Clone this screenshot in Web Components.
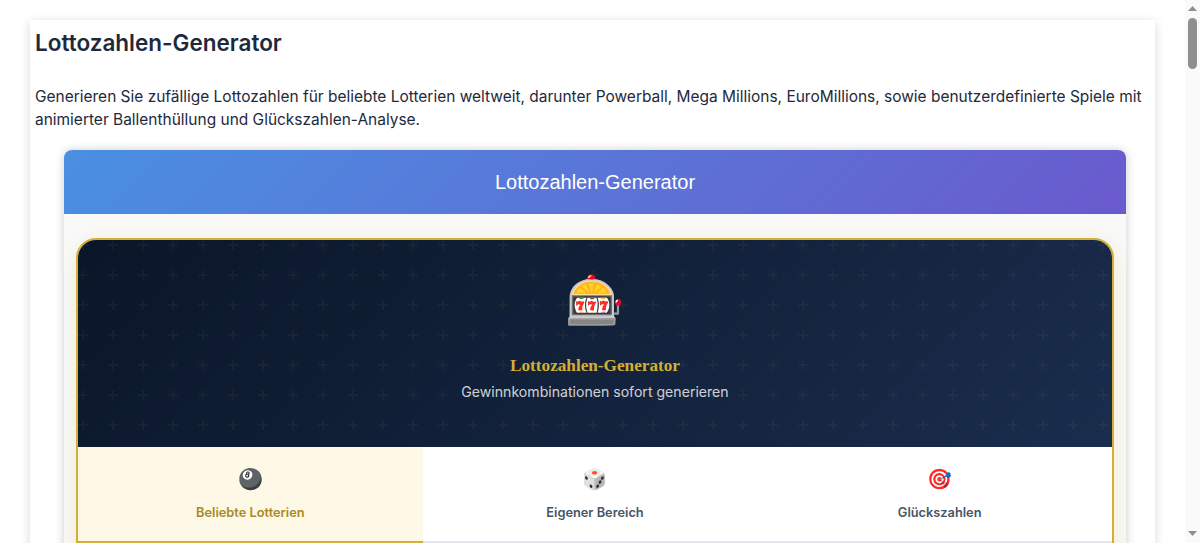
<!DOCTYPE html>
<html lang="de">
<head>
<meta charset="utf-8">
<title>Lottozahlen-Generator</title>
<style>
  html, body { height: 100%; }
  body { margin: 0; display: flex; overflow: hidden; background: #fff; font-family: Inter, "Noto Sans", sans-serif; color: #1e293b; }
  main { flex: 1; min-width: 0; overflow: hidden; padding: 20px 30px 0; }
</style>
</head>
<body>
<main>
<lotto-page heading="Lottozahlen-Generator">
  Generieren Sie zufällige Lottozahlen für beliebte Lotterien weltweit, darunter Powerball, Mega Millions, EuroMillions, sowie benutzerdefinierte Spiele mit animierter Ballenthüllung und Glückszahlen-Analyse.
  <lotto-widget slot="widget" heading="Lottozahlen-Generator">
    <lotto-hero icon="🎰" heading="Lottozahlen-Generator" sub="Gewinnkombinationen sofort generieren"></lotto-hero>
    <lotto-tabs>
      <lotto-tab icon="🎱" active>Beliebte Lotterien</lotto-tab>
      <lotto-tab icon="🎲">Eigener Bereich</lotto-tab>
      <lotto-tab icon="🎯">Glückszahlen</lotto-tab>
    </lotto-tabs>
  </lotto-widget>
</lotto-page>
</main>
<page-scrollbar></page-scrollbar>

<script>
class LottoPage extends HTMLElement {
  constructor() {
    super();
    this.attachShadow({ mode: 'open' });
    this.shadowRoot.innerHTML = `
      <style>
        :host { display: block; background: #fff; padding: 0 5px 5px; box-shadow: 0 2px 10px rgba(0,0,0,.15); }
        h1 { margin: 0; padding-top: 5px; font-size: 22.5px; line-height: 36px; font-weight: 600; color: #1e293b; }
        p { margin: 24px 0 0; font-size: 15.47px; line-height: 23px; color: #1e293b; }
        .slot-wrap { margin: 19px 24px 0 29px; }
      </style>
      <h1>${this.getAttribute('heading')}</h1>
      <p><slot></slot></p>
      <div class="slot-wrap"><slot name="widget"></slot></div>`;
  }
}

class LottoWidget extends HTMLElement {
  constructor() {
    super();
    this.attachShadow({ mode: 'open' });
    this.shadowRoot.innerHTML = `
      <style>
        :host { display: block; border-radius: 8px; background: #f9f9f9; box-shadow: 0 0 10px rgba(0,0,0,.2); }
        header { height: 64px; display: flex; align-items: center; justify-content: center; border-radius: 8px 8px 0 0;
                 background: linear-gradient(135deg, #4a90e2, #6a5acd); color: #fff;
                 font: 20px "Liberation Sans", Arial, sans-serif; }
        .body { padding: 24px 12px 12px; }
        .inner { min-height: 600px; border: 2px solid #d4af37; border-radius: 20px; overflow: hidden; background: #fff;
                 box-shadow: 0 4px 20px rgba(212,175,55,.2); }
      </style>
      <header>${this.getAttribute('heading')}</header>
      <div class="body"><div class="inner"><slot></slot></div></div>`;
  }
}

class LottoHero extends HTMLElement {
  constructor() {
    super();
    this.attachShadow({ mode: 'open' });
    const cross = "data:image/svg+xml,%3Csvg xmlns='http://www.w3.org/2000/svg' width='30' height='30'%3E%3Cpath d='M4 0h2v4h4v2H6v4H4V6H0V4h4z' fill='%23d4af37' fill-opacity='.05'/%3E%3C/svg%3E";
    this.shadowRoot.innerHTML = `
      <style>
        :host { display: flex; flex-direction: column; align-items: center; height: 207px; box-sizing: border-box;
                padding-top: 25px; text-align: center;
                background: url("${cross}"), linear-gradient(135deg, #0a1628, #1a2d4d); }
        .icon { font-size: 48px; line-height: 72px; font-family: "Noto Color Emoji", sans-serif; }
        h2 { margin: 17px 0 0; font: 700 17.2px/24px "Liberation Serif", serif; color: #d4af37; }
        p { margin: 3px 0 0; font-size: 14.1px; line-height: 22px; color: rgba(255,255,255,.8); }
      </style>
      <div class="icon">${this.getAttribute('icon')}</div>
      <h2>${this.getAttribute('heading')}</h2>
      <p>${this.getAttribute('sub')}</p>`;
  }
}

class LottoTabs extends HTMLElement {
  constructor() {
    super();
    this.attachShadow({ mode: 'open' });
    this.shadowRoot.innerHTML = `
      <style>
        :host { display: grid; grid-template-columns: repeat(3, 1fr); background: #fff; border-bottom: 2px solid #e2e8f0; }
      </style>
      <slot></slot>`;
  }
}

class LottoTab extends HTMLElement {
  constructor() {
    super();
    this.attachShadow({ mode: 'open' });
    this.shadowRoot.innerHTML = `
      <style>
        :host { display: flex; flex-direction: column; align-items: center; height: 96px; box-sizing: border-box;
                margin-bottom: -2px; padding-top: 16px; color: #475569; border-bottom: 2px solid transparent; }
        :host([active]) { background: #fef8e7; color: #a88a24; border-bottom-color: #d4af37; }
        .icon { font-size: 20px; line-height: 32px; font-family: "Noto Color Emoji", sans-serif; }
        .label { margin-top: 8px; font-size: 12.8px; line-height: 20px; font-weight: 600; }
      </style>
      <div class="icon">${this.getAttribute('icon')}</div>
      <div class="label"><slot></slot></div>`;
  }
}

class PageScrollbar extends HTMLElement {
  constructor() {
    super();
    this.attachShadow({ mode: 'open' });
    this.shadowRoot.innerHTML = `
      <style>
        :host { display: flex; flex: none; flex-direction: column; align-items: center; width: 15px; background: #fafafa; }
        svg { display: block; flex: none; margin-top: 6px; }
        .thumb { width: 9px; height: 51px; margin-top: 7px; border-radius: 5px; background: #8f8f8f; }
        .down { margin-top: auto; margin-bottom: 7px; }
      </style>
      <svg width="9" height="5"><path d="M4.5 0 9 5H0z" fill="#8f8f8f"/></svg>
      <div class="thumb"></div>
      <svg class="down" width="9" height="5"><path d="M0 0h9L4.5 5z" fill="#8f8f8f"/></svg>`;
  }
}

customElements.define('lotto-page', LottoPage);
customElements.define('lotto-widget', LottoWidget);
customElements.define('lotto-hero', LottoHero);
customElements.define('lotto-tabs', LottoTabs);
customElements.define('lotto-tab', LottoTab);
customElements.define('page-scrollbar', PageScrollbar);
</script>
</body>
</html>
